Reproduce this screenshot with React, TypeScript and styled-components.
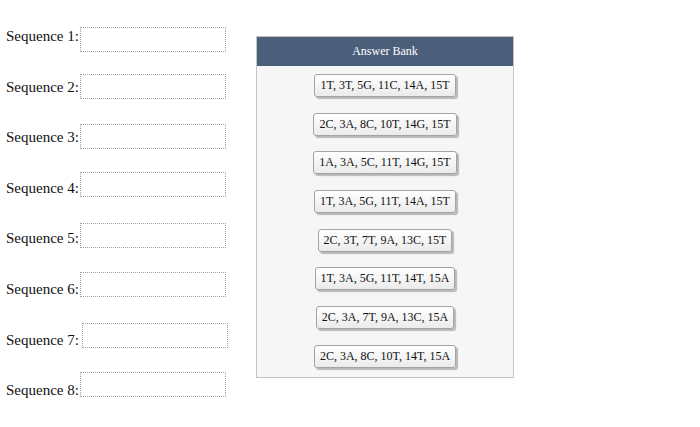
import React from 'react';
import styled, { createGlobalStyle } from 'styled-components';

const GlobalStyle = createGlobalStyle`
  body {
    margin: 0;
    background: #fff;
    font-family: "Liberation Serif", "Times New Roman", serif;
    color: #111;
  }
`;

const Page = styled.div`
  display: flex;
  align-items: flex-start;
  padding: 24px 0 0 6px;
`;

const Sequences = styled.div`
  display: flex;
  flex-direction: column;
  width: 250px;
`;

const Row = styled.div`
  display: flex;
  align-items: flex-start;
  height: 50.6px;
`;

const Label = styled.span`
  font-size: 15px;
  line-height: 24px;
  white-space: nowrap;
`;

const DropBox = styled.div<{ $nudge: number; $indent?: number }>`
  width: 144px;
  height: 23px;
  margin-top: ${p => p.$nudge}px;
  margin-left: ${p => 1 + (p.$indent ?? 0)}px;
  border: 1px dotted #a0a0a0;
  background: #fff;
`;

const Bank = styled.div`
  width: 256px;
  margin-top: 12px;
  border: 1px solid #c4c4c4;
  background: #f6f6f6;
`;

const BankHeader = styled.div`
  background: #4b5e7a;
  color: #fff;
  font-size: 12px;
  height: 29px;
  display: flex;
  align-items: center;
  justify-content: center;
`;

const BankList = styled.div`
  display: flex;
  flex-direction: column;
  align-items: center;
  gap: 15.7px;
  padding: 8px 0 9px;
`;

const Answer = styled.button`
  font-family: "Liberation Serif", "Times New Roman", serif;
  font-size: 12px;
  line-height: 16px;
  color: #111;
  padding: 2px 5px 3px;
  border: 1px solid #a4a4a4;
  border-radius: 3px;
  background: linear-gradient(#ffffff, #ebebeb);
  box-shadow: 2px 2px 1px #b8b8b8;
  cursor: pointer;
`;

const slots = [
  { nudge: 3 },
  { nudge: -1 },
  { nudge: -1 },
  { nudge: -4 },
  { nudge: -3 },
  { nudge: -5 },
  { nudge: -5, indent: 2 },
  { nudge: -6 },
];

const answers = [
  '1T, 3T, 5G, 11C, 14A, 15T',
  '2C, 3A, 8C, 10T, 14G, 15T',
  '1A, 3A, 5C, 11T, 14G, 15T',
  '1T, 3A, 5G, 11T, 14A, 15T',
  '2C, 3T, 7T, 9A, 13C, 15T',
  '1T, 3A, 5G, 11T, 14T, 15A',
  '2C, 3A, 7T, 9A, 13C, 15A',
  '2C, 3A, 8C, 10T, 14T, 15A',
];

const App = () => (
  <>
    <GlobalStyle />
    <Page>
      <Sequences>
        {slots.map((s, i) => (
          <Row key={i}>
            <Label>Sequence {i + 1}:</Label>
            <DropBox $nudge={s.nudge} $indent={s.indent} />
          </Row>
        ))}
      </Sequences>
      <Bank>
        <BankHeader>Answer Bank</BankHeader>
        <BankList>
          {answers.map(a => (
            <Answer key={a}>{a}</Answer>
          ))}
        </BankList>
      </Bank>
    </Page>
  </>
);

export default App;
